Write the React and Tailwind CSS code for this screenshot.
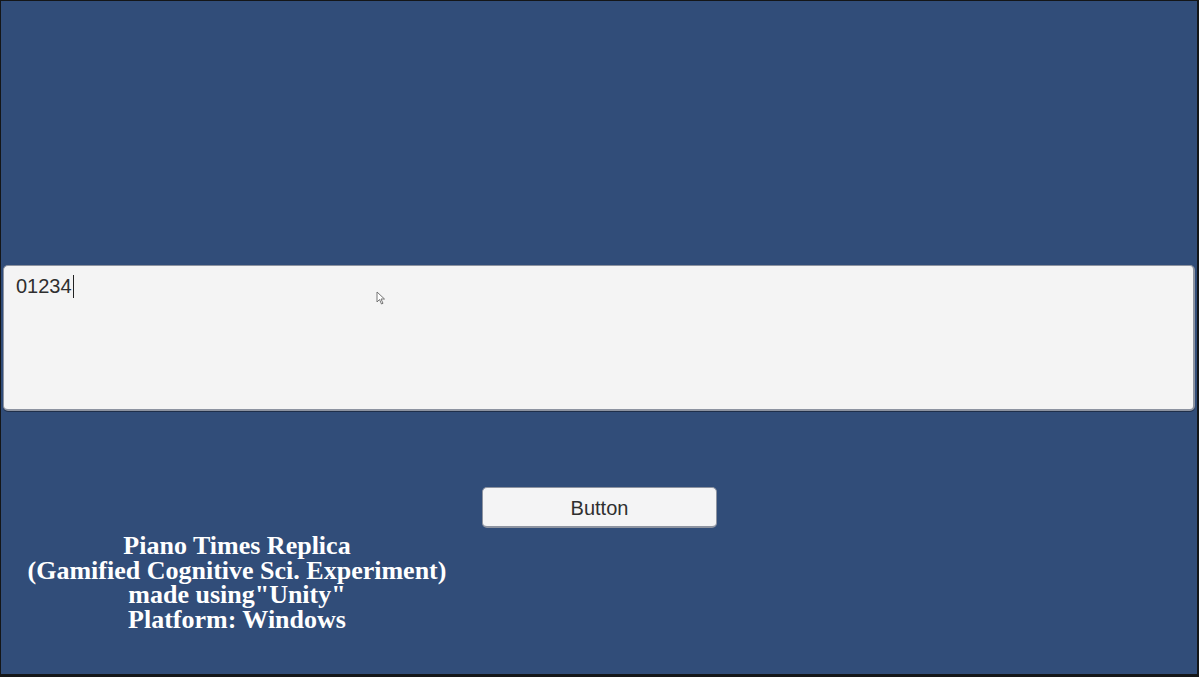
export default function App() {
  return (
    <div className="h-[677px] w-[1199px] bg-[#141618] overflow-hidden">
      <div className="ml-px mt-px mr-[2px] h-[673px] bg-[#314d79] flex flex-col">
        <div className="h-[264px]" />
        <div className="mx-[2px] h-[146px] rounded-[5px] bg-[#f4f4f4] border border-b-2 border-r-2 border-[#8d93a0] shadow-[0_1px_0_#1f2f4a] px-[12px] pt-[6px]">
          <span className="text-[20px] leading-[28px] text-[#2f2f2f] font-['Liberation_Sans',Arial,sans-serif]">01234</span>
          <span className="inline-block w-px h-[23px] bg-[#222] align-[-5px] ml-[1px]" />
          <svg className="inline-block ml-[302px] align-[-12px]" width="10" height="14" viewBox="0 0 10 14">
            <path d="M1 1 L1 11 L3.5 8.5 L5.5 13 L7 12.3 L5 8 L8.5 8 Z" fill="#fff" stroke="#666" strokeWidth="0.9" strokeLinejoin="round" />
          </svg>
        </div>
        <div className="h-[76px]" />
        <div className="flex justify-center pr-[2px]">
          <div className="ml-[3px] w-[235px] h-[41px] rounded-[5px] bg-[#f4f4f5] border border-b-2 border-[#8d93a0] flex items-center justify-center pt-px text-[20px] text-[#2f2f2f] font-['Liberation_Sans',Arial,sans-serif]">
            Button
          </div>
        </div>
        <div className="w-[472px] mt-[6px] text-center text-white font-bold text-[26px] leading-[24.5px] font-['Liberation_Serif','Times_New_Roman',serif]">
          <div>Piano Times Replica</div>
          <div>(Gamified Cognitive Sci. Experiment)</div>
          <div>made using"Unity"</div>
          <div>Platform: Windows</div>
        </div>
      </div>
    </div>
  );
}
